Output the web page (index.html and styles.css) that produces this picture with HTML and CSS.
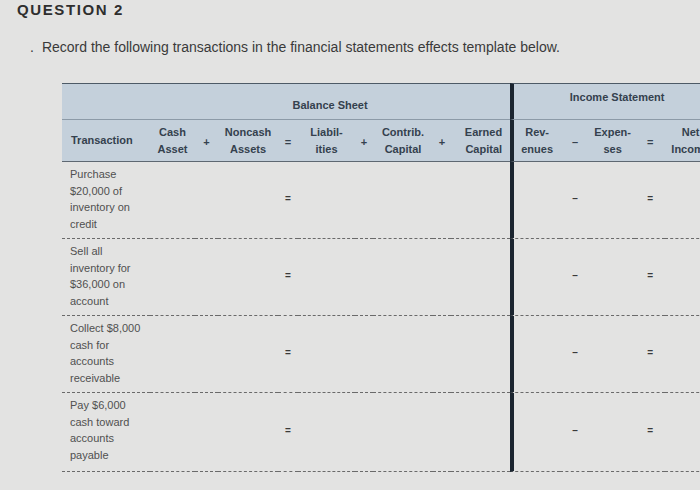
FILE: index.html
```html
<!DOCTYPE html>
<html>
<head>
<meta charset="utf-8">
<link rel="stylesheet" href="styles.css">
</head>
<body>
<h1 class="qtitle">QUESTION 2</h1>
<p class="prompt"><span class="dot">.</span>Record the following transactions in the financial statements effects template below.</p>
<table class="fse">
  <colgroup>
    <col class="c-trans"><col class="c-cash"><col class="c-op1"><col class="c-noncash"><col class="c-op2"><col class="c-liab"><col class="c-op3"><col class="c-contrib"><col class="c-op4"><col class="c-earned"><col class="c-rev"><col class="c-op5"><col class="c-exp"><col class="c-op6"><col class="c-net">
  </colgroup>
  <thead>
    <tr class="h1">
      <th class="blank"></th>
      <th colspan="9" class="bs">Balance Sheet</th>
      <th colspan="5" class="is sep">Income Statement</th>
    </tr>
    <tr class="h2">
      <th class="trans">Transaction</th>
      <th>Cash<br>Asset</th>
      <th class="op">+</th>
      <th>Noncash<br>Assets</th>
      <th class="op">=</th>
      <th>Liabil-<br>ities</th>
      <th class="op">+</th>
      <th>Contrib.<br>Capital</th>
      <th class="op">+</th>
      <th class="earned">Earned<br>Capital</th>
      <th class="sep">Rev-<br>enues</th>
      <th class="op">–</th>
      <th>Expen-<br>ses</th>
      <th class="op">=</th>
      <th class="net">Net<br>Income</th>
    </tr>
  </thead>
  <tbody>
    <tr>
      <td class="trans">Purchase<br>$20,000 of<br>inventory on<br>credit</td>
      <td></td><td></td><td></td><td class="eq">=</td><td></td><td></td><td></td><td></td><td></td>
      <td class="sep"></td><td class="mn">–</td><td></td><td class="eq">=</td><td></td>
    </tr>
    <tr>
      <td class="trans">Sell all<br>inventory for<br>$36,000 on<br>account</td>
      <td></td><td></td><td></td><td class="eq">=</td><td></td><td></td><td></td><td></td><td></td>
      <td class="sep"></td><td class="mn">–</td><td></td><td class="eq">=</td><td></td>
    </tr>
    <tr>
      <td class="trans">Collect $8,000<br>cash for<br>accounts<br>receivable</td>
      <td></td><td></td><td></td><td class="eq">=</td><td></td><td></td><td></td><td></td><td></td>
      <td class="sep"></td><td class="mn">–</td><td></td><td class="eq">=</td><td></td>
    </tr>
    <tr>
      <td class="trans">Pay $6,000<br>cash toward<br>accounts<br>payable</td>
      <td></td><td></td><td></td><td class="eq">=</td><td></td><td></td><td></td><td></td><td></td>
      <td class="sep"></td><td class="mn">–</td><td></td><td class="eq">=</td><td></td>
    </tr>
  </tbody>
</table>
</body>
</html>
```

FILE: styles.css
```css
html, body {
  margin: 0;
  padding: 0;
}
body {
  width: 700px;
  height: 490px;
  overflow: hidden;
  background: #e3e3e2;
  font-family: "Liberation Sans", Arial, sans-serif;
}
.qtitle {
  margin: 0;
  padding: 1px 0 0 17px;
  font-size: 15px;
  line-height: 17px;
  letter-spacing: 1.6px;
  font-weight: bold;
  color: #2e2e2e;
}
.prompt {
  margin: 21px 0 0 30px;
  font-size: 14px;
  line-height: 16px;
  color: #3a3a3a;
}
.dot {
  margin-right: 8px;
}
.fse {
  margin: 28px 0 0 62px;
  border-collapse: separate;
  border-spacing: 0;
  table-layout: fixed;
  width: 658px;
}
.c-trans { width: 88px; }
.c-cash { width: 45px; }
.c-op1 { width: 23px; }
.c-noncash { width: 60px; }
.c-op2 { width: 20px; }
.c-liab { width: 57px; }
.c-op3 { width: 18px; }
.c-contrib { width: 60px; }
.c-op4 { width: 18px; }
.c-earned { width: 59px; }
.c-rev { width: 50px; }
.c-op5 { width: 30px; }
.c-exp { width: 45px; }
.c-op6 { width: 30px; }
.c-net { width: 55px; }

.fse th,
.fse td {
  box-sizing: border-box;
}
.fse th {
  background: #c4d0db;
  color: #34414e;
  font-size: 11px;
  font-weight: bold;
  padding: 0;
  white-space: nowrap;
  overflow: hidden;
}
.h1 th {
  height: 37px;
  border-top: 1px solid #4d5a66;
  border-bottom: 1px solid #8c9aa7;
  vertical-align: top;
  line-height: 14px;
}
.h1 .bs {
  padding-top: 14px;
  text-align: center;
}
.h1 .is {
  padding-top: 6px;
  text-align: center;
}
.h2 th {
  height: 42px;
  line-height: 17px;
  border-bottom: 1px solid #5e6872;
  text-align: center;
  vertical-align: middle;
}
.h2 .trans {
  text-align: left;
  padding-left: 9px;
}
.h2 .op {
  padding-top: 4px;
}
.h2 .earned {
  text-align: right;
  padding-right: 8px;
}
.h2 .net {
  text-align: center;
  padding-right: 4px;
}
.fse .sep {
  border-left: 4px solid #1b2530;
}
.fse td {
  height: 77px;
  padding: 4px 0 6px;
  border-bottom: 1px dashed #6a6a6a;
  font-size: 11px;
  line-height: 16.5px;
  color: #505050;
  vertical-align: middle;
  text-align: center;
  white-space: nowrap;
  overflow: hidden;
}
.fse tbody tr:last-child td {
  height: 79px;
}
.fse td.trans {
  text-align: left;
  padding-left: 8px;
  vertical-align: top;
}
.fse td.eq {
  font-weight: bold;
  color: #3a3a3a;
  font-size: 10px;
}
.fse td.mn {
  color: #3a3a3a;
  font-size: 10px;
  font-weight: bold;
}
```
